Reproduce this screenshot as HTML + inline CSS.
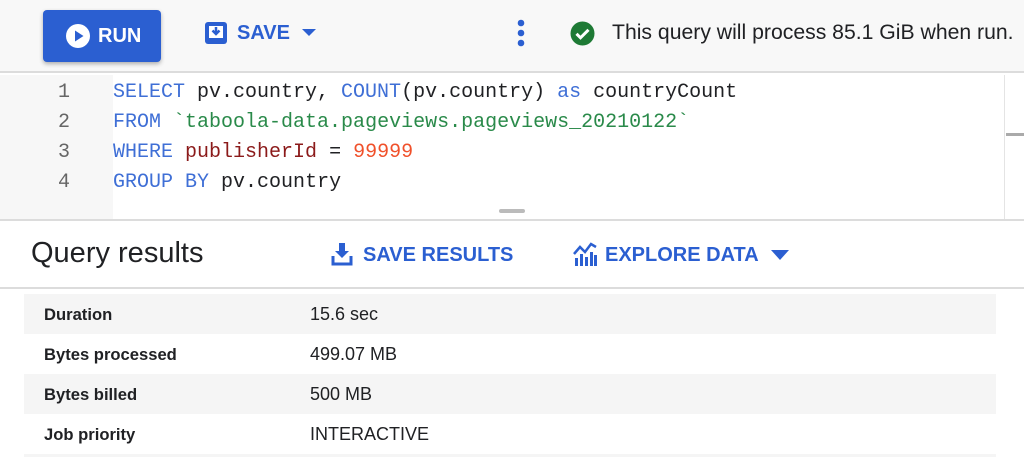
<!DOCTYPE html>
<html style="overflow:hidden;width:1024px;height:457px"><head><style>
*{margin:0;padding:0;box-sizing:border-box}
body{width:1024px;height:457px;overflow:hidden;background:#fff;font-family:"Liberation Sans",sans-serif;position:relative}
.abs{position:absolute}
.top{left:0;top:0;width:1024px;height:73px;background:#f8f8f8;border-bottom:2px solid #dcdcdc}
.run{left:43px;top:10px;width:118px;height:52px;background:#2b5fd1;border-radius:4px;box-shadow:0 2px 4px rgba(0,0,0,.3);color:#fff;font-size:20px;font-weight:bold}
.blue{color:#2b5fd1}
.gut{left:0;top:75px;width:113px;height:144px;background:#f7f7f7}
.code{font-family:"Liberation Mono",monospace;font-size:20px;line-height:30px;white-space:pre;color:#202124}
.ln{color:#666;font-family:"Liberation Mono",monospace;font-size:20px;line-height:30px;text-align:right;width:70px}
.k{color:#3f6fd6}.s{color:#2a8a4a}.v{color:#8b1a1a}.n{color:#f0502a}
.row{left:24px;width:972px;height:40px;font-size:18px;color:#202124}
.row b{position:absolute;left:20px;top:11px;font-weight:bold;font-size:16.6px}
.row span{position:absolute;left:286px;top:10px}
.g{background:#f5f5f5}
</style></head><body>
<div class="abs top"></div>
<div class="abs run">
<svg class="abs" style="left:22px;top:13px" width="26" height="26" viewBox="0 0 26 26"><circle cx="13" cy="13" r="12" fill="#fff"/><path d="M10 7.5L18.5 13L10 18.5Z" fill="#2b5fd1"/></svg>
<span class="abs" style="left:55px;top:15px">RUN</span></div>
<svg class="abs" style="left:204px;top:21px" width="24" height="24" viewBox="0 0 24 24"><rect x="1" y="1" width="22" height="22" rx="3" fill="#2b5fd1"/><rect x="5" y="5" width="14" height="12" fill="#fff"/><path d="M12 6v6M8.5 9.5L12 13l3.5-3.5" stroke="#2b5fd1" stroke-width="2.5" fill="none"/></svg>
<span class="abs blue" style="left:237px;top:22px;font-size:20px;font-weight:bold">SAVE</span>
<svg class="abs" style="left:302px;top:29px" width="14" height="8"><path d="M0 0h14L7 7z" fill="#2b5fd1"/></svg>
<svg class="abs" style="left:516px;top:19px" width="10" height="28"><circle cx="5" cy="4" r="3.3" fill="#2b5fd1"/><circle cx="5" cy="14" r="3.3" fill="#2b5fd1"/><circle cx="5" cy="24" r="3.3" fill="#2b5fd1"/></svg>
<svg class="abs" style="left:570px;top:21px" width="25" height="25" viewBox="0 0 25 25"><circle cx="12.5" cy="12.5" r="12" fill="#1e7a35"/><path d="M6.5 12.8l4 4 8-8" stroke="#fff" stroke-width="3" fill="none"/></svg>
<span class="abs" style="left:612px;top:21px;font-size:21.2px;color:#202124">This query will process 85.1 GiB when run.</span>

<div class="abs gut"></div>
<div class="abs ln" style="left:0;top:78px">1<br>2<br>3<br>4</div>
<div class="abs code" style="left:113px;top:78px"><span class="k">SELECT</span> pv.country, <span class="k">COUNT</span>(pv.country) <span class="k">as</span> countryCount
<span class="k">FROM</span> <span class="s">`taboola-data.pageviews.pageviews_20210122`</span>
<span class="k">WHERE</span> <span class="v">publisherId</span> = <span class="n">99999</span>
<span class="k">GROUP</span> <span class="k">BY</span> pv.country</div>
<div class="abs" style="left:1004px;top:75px;width:1px;height:144px;background:#e4e4e4"></div>
<div class="abs" style="left:1006px;top:133px;width:18px;height:3px;background:#aaa"></div>
<div class="abs" style="left:499px;top:209px;width:26px;height:4px;background:#bbb;border-radius:2px"></div>
<div class="abs" style="left:0;top:219px;width:1024px;height:2px;background:#dcdcdc"></div>

<span class="abs" style="left:31px;top:237px;font-size:29px;color:#202124">Query results</span>
<svg class="abs" style="left:331px;top:242px" width="22" height="24" viewBox="0 0 22 24"><path d="M8 1h6v8h4l-7 7-7-7h4z" fill="#2b5fd1"/><path d="M2 14v8h18v-8" stroke="#2b5fd1" stroke-width="3" fill="none"/></svg>
<span class="abs blue" style="left:363px;top:244px;font-size:20px;font-weight:bold">SAVE RESULTS</span>
<svg class="abs" style="left:573px;top:242px" width="25" height="24" viewBox="0 0 25 24"><path d="M1 12l6-7 5 5 6-8 5 3" stroke="#2b5fd1" stroke-width="2.5" fill="none"/><path d="M2 16h3v8H2zM7 12h3v12H7zM12 15h3v9h-3zM17 10h3v14h-3zM21 13h3v11h-3z" fill="#2b5fd1"/></svg>
<span class="abs blue" style="left:605px;top:244px;font-size:20px;font-weight:bold">EXPLORE DATA</span>
<svg class="abs" style="left:771px;top:250px" width="18" height="10"><path d="M0 0h18L9 10z" fill="#2b5fd1"/></svg>
<div class="abs" style="left:0;top:287px;width:1024px;height:2px;background:#dcdcdc"></div>

<div class="abs row g" style="top:294px"><b>Duration</b><span>15.6 sec</span></div>
<div class="abs row" style="top:334px"><b>Bytes processed</b><span>499.07 MB</span></div>
<div class="abs row g" style="top:374px"><b>Bytes billed</b><span>500 MB</span></div>
<div class="abs row" style="top:414px"><b>Job priority</b><span>INTERACTIVE</span></div>
<div class="abs g" style="left:24px;width:972px;top:454px;height:3px"></div>
</body></html>
